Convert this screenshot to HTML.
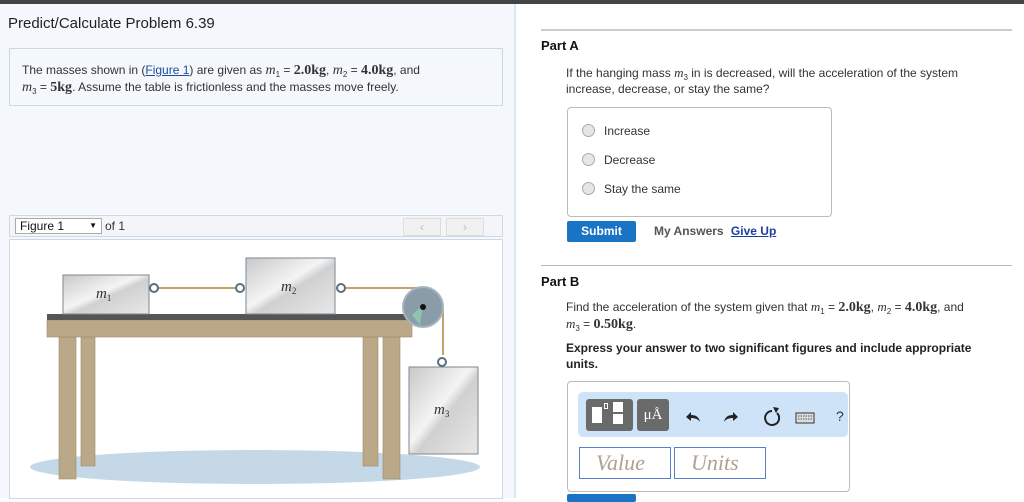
<!DOCTYPE html>
<html><head><meta charset="utf-8"><style>
*{margin:0;padding:0;box-sizing:border-box}
body{width:1024px;height:498px;overflow:hidden;position:relative;font-family:"Liberation Sans",Arial,sans-serif;background:#fff;color:#333}
.a{position:absolute}
.m{font-family:"Liberation Serif",serif;font-style:italic;font-size:14px}
.n{font-family:"Liberation Serif",serif;font-size:14px;font-weight:bold}
.t{font-size:12px;color:#333}
sub{font-size:8px;line-height:0;vertical-align:0;position:relative;top:3px}
</style></head><body>
<div class="a" style="left:0;top:0;width:1024px;height:4px;background:#444"></div>
<div class="a" style="left:0;top:4px;width:514px;height:494px;background:#f4f8fd"></div>
<div class="a" style="left:514px;top:4px;width:2px;height:494px;background:#dce6f2"></div>
<div class="a" style="left:8px;top:15px;font-size:15px;color:#222">Predict/Calculate Problem 6.39</div>
<div class="a" style="left:9px;top:48px;width:494px;height:58px;border:1px solid #ccd8e6;background:#f4f8fd"></div>
<div class="a t" style="left:22px;top:62px;line-height:16px;width:470px">The masses shown in (<span style="color:#1a4fa0;text-decoration:underline">Figure 1</span>) are given as <span class="m">m</span><sub>1</sub> = <span class="n">2.0kg</span>, <span class="m">m</span><sub>2</sub> = <span class="n">4.0kg</span>, and<br><span class="m">m</span><sub>3</sub> = <span class="n">5kg</span>. Assume the table is frictionless and the masses move freely.</div>
<div class="a" style="left:9px;top:215px;width:494px;height:22px;border:1px solid #ccd8e6;background:#f3f5f8"></div>
<div class="a" style="left:15px;top:218px;width:87px;height:16px;border:1px solid #aaa;background:#fff;font-size:12px;color:#111;padding-left:4px;line-height:14px">Figure 1<span style="position:absolute;right:4px;font-size:8px">▼</span></div>
<div class="a t" style="left:105px;top:219px">of 1</div>
<div class="a" style="left:403px;top:218px;width:38px;height:18px;border:1px solid #ddd;background:#f1f1f1;color:#bbb;text-align:center;font-size:12px;line-height:16px">&lsaquo;</div>
<div class="a" style="left:446px;top:218px;width:38px;height:18px;border:1px solid #ddd;background:#f1f1f1;color:#bbb;text-align:center;font-size:12px;line-height:16px">&rsaquo;</div>
<div class="a" style="left:9px;top:239px;width:494px;height:260px;border:1px solid #ccd8e6;background:#fff"></div>
<svg class="a" style="left:0;top:0" width="512" height="498">
<defs><linearGradient id="g" x1="0" y1="0" x2="1" y2="1"><stop offset="0" stop-color="#c8c8c8"/><stop offset=".45" stop-color="#f4f4f4"/><stop offset=".55" stop-color="#d0d0d0"/><stop offset="1" stop-color="#e8e8e8"/></linearGradient></defs>
<ellipse cx="255" cy="467" rx="225" ry="17" fill="#c4d8e8"/>
<g fill="#bba888" stroke="#9c8a6a" stroke-width=".6">
<rect x="59" y="337" width="17" height="142"/><rect x="81" y="337" width="14" height="129"/>
<rect x="363" y="337" width="15" height="129"/><rect x="383" y="337" width="17" height="142"/>
<rect x="47" y="320" width="365" height="17"/></g>
<rect x="47" y="314" width="365" height="6" fill="#555"/>
<rect x="63" y="275" width="86" height="39" fill="url(#g)" stroke="#7a8a96"/>
<rect x="246" y="258" width="89" height="56" fill="url(#g)" stroke="#7a8a96"/>
<rect x="409" y="367" width="69" height="87" fill="url(#g)" stroke="#7a8a96"/>
<g stroke="#c4a270" stroke-width="2" fill="none"><path d="M158 288H235"/><path d="M345 288H423"/><path d="M443 307V355"/></g>
<g stroke="#5a7080" stroke-width="2" fill="#fff"><circle cx="154" cy="288" r="4"/><circle cx="240" cy="288" r="4"/><circle cx="341" cy="288" r="4"/><circle cx="442" cy="362" r="4"/></g>
<circle cx="423" cy="307" r="20" fill="#8a9ca8" stroke="#a6b6c0" stroke-width="2"/>
<path d="M412 315L423 305L420 325Z" fill="#8cc4b0"/>
<circle cx="423" cy="307" r="3" fill="#111"/>
<g font-family="Liberation Serif" font-style="italic" font-size="15" fill="#333"><text x="96" y="298">m<tspan font-size="9" dy="3" font-style="normal">1</tspan></text><text x="281" y="291">m<tspan font-size="9" dy="3" font-style="normal">2</tspan></text><text x="434" y="414">m<tspan font-size="9" dy="3" font-style="normal">3</tspan></text></g>
</svg>
<div class="a" style="left:541px;top:29px;width:471px;height:2px;background:#ccc"></div>
<div class="a" style="left:541px;top:38px;font-size:13px;font-weight:bold;color:#111">Part A</div>
<div class="a t" style="left:566px;top:65px;line-height:16px">If the hanging mass <span class="m" style="font-size:13px">m</span><sub>3</sub> in is decreased, will the acceleration of the system<br>increase, decrease, or stay the same?</div>
<div class="a" style="left:567px;top:107px;width:265px;height:110px;border:1px solid #bbb;border-radius:4px"></div>
<div class="a t" style="left:582px;top:117px;line-height:29px">
<div><span style="display:inline-block;width:13px;height:13px;border-radius:50%;border:1px solid #aaa;background:#e6e6e6;vertical-align:-2px;margin-right:9px"></span>Increase</div>
<div><span style="display:inline-block;width:13px;height:13px;border-radius:50%;border:1px solid #aaa;background:#e6e6e6;vertical-align:-2px;margin-right:9px"></span>Decrease</div>
<div><span style="display:inline-block;width:13px;height:13px;border-radius:50%;border:1px solid #aaa;background:#e6e6e6;vertical-align:-2px;margin-right:9px"></span>Stay the same</div></div>
<div class="a" style="left:567px;top:221px;width:69px;height:21px;background:#1a74c6;border-radius:2px;color:#fff;font-size:12px;font-weight:bold;text-align:center;line-height:20px">Submit</div>
<div class="a" style="left:654px;top:224px;font-size:12px;font-weight:bold;color:#555">My Answers <span style="color:#1a3fa0;text-decoration:underline;margin-left:4px">Give Up</span></div>
<div class="a" style="left:541px;top:265px;width:471px;height:1px;background:#bbb"></div>
<div class="a" style="left:541px;top:274px;font-size:13px;font-weight:bold;color:#111">Part B</div>
<div class="a t" style="left:566px;top:299px;line-height:16px">Find the acceleration of the system given that <span class="m" style="font-size:13px">m</span><sub>1</sub> = <span class="n">2.0kg</span>, <span class="m" style="font-size:13px">m</span><sub>2</sub> = <span class="n">4.0kg</span>, and<br><span class="m" style="font-size:13px">m</span><sub>3</sub> = <span class="n">0.50kg</span>.</div>
<div class="a" style="left:566px;top:340px;font-size:12px;font-weight:bold;color:#222;line-height:16px">Express your answer to two significant figures and include appropriate<br>units.</div>
<div class="a" style="left:567px;top:381px;width:283px;height:111px;border:1px solid #bbb;border-radius:4px"></div>
<div class="a" style="left:578px;top:392px;width:270px;height:45px;background:#cfe3f8;border-radius:5px"></div>
<div class="a" style="left:586px;top:399px;width:47px;height:32px;background:#6a6a6a;border-radius:3px"></div>
<div class="a" style="left:592px;top:407px;width:10px;height:16px;background:#fff"></div>
<div class="a" style="left:604px;top:403px;width:4px;height:6px;border:1px solid #fff"></div>
<div class="a" style="left:613px;top:402px;width:10px;height:10px;background:#fff"></div>
<div class="a" style="left:613px;top:414px;width:10px;height:10px;background:#fff"></div>
<div class="a" style="left:637px;top:399px;width:32px;height:32px;background:#6a6a6a;border-radius:3px;color:#fff;font-family:'Liberation Serif';font-size:15px;text-align:center;line-height:32px">μÅ</div>
<svg class="a" style="left:680px;top:402px" width="160" height="26">
<path d="M6 15l5-5v3c5 0 8 2 9 7-2-3-5-4-9-4v3z" fill="#222"/>
<path d="M58 15l-5-5v3c-5 0-8 2-9 7 2-3 5-4 9-4v3z" fill="#222"/>
<path d="M92 9a7 7 0 1 0 5 2" stroke="#222" stroke-width="2" fill="none"/><path d="M93 5l6 1-3 5z" fill="#222"/>
<rect x="116" y="11" width="18" height="10" fill="#ddd" stroke="#333"/><path d="M118 14h14M118 17h14" stroke="#555" stroke-dasharray="1.5 1"/>
</svg>
<div class="a" style="left:836px;top:408px;font-size:14px;color:#333">?</div>
<div class="a" style="left:579px;top:447px;width:92px;height:32px;border:1px solid #5580d0;font-family:'Liberation Serif';font-style:italic;font-size:22px;color:#b0a090;padding-left:16px;line-height:30px">Value</div>
<div class="a" style="left:674px;top:447px;width:92px;height:32px;border:1px solid #5580d0;font-family:'Liberation Serif';font-style:italic;font-size:22px;color:#b0a090;padding-left:16px;line-height:30px">Units</div>
<div class="a" style="left:567px;top:494px;width:69px;height:8px;background:#1a74c6;border-radius:2px"></div>
</body></html>
